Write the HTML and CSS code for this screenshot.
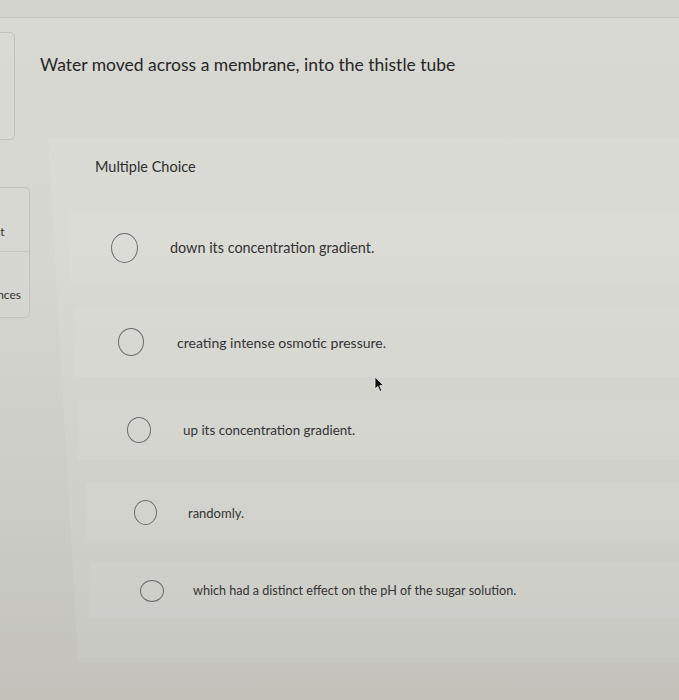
FILE: index.html
```html
<html>
  <head>
    <meta charset="utf-8" />
    <title>Multiple Choice</title>
    <meta name="viewport" content="width=device-width, initial-scale=1" />
    <link rel="stylesheet" href="styles.css">
  </head>
  <body>
    <div class="topbar"></div>
    <div class="page">
      <div class="side">
        <div class="side_card side_card_top"></div>
        <div class="side_card side_card_links">
          <div class="side_link side_link_first">Print</div>
          <div class="side_link">References</div>
        </div>
      </div>
      <div class="main">
        <p class="question">Water moved across a membrane, into the thistle tube</p>
        <div class="answer_panel">
          <p class="panel_heading">Multiple Choice</p>
          <label class="choice choice_1">
            <span class="radio"></span>
            <span class="choice_text">down its concentration gradient.</span>
          </label>
          <label class="choice choice_2">
            <span class="radio"></span>
            <span class="choice_text">creating intense osmotic pressure.</span>
          </label>
          <label class="choice choice_3">
            <span class="radio"></span>
            <span class="choice_text">up its concentration gradient.</span>
          </label>
          <label class="choice choice_4">
            <span class="radio"></span>
            <span class="choice_text">randomly.</span>
          </label>
          <label class="choice choice_5">
            <span class="radio"></span>
            <span class="choice_text">which had a distinct effect on the pH of the sugar solution.</span>
          </label>
        </div>
      </div>
    </div>
    <!-- mouse pointer -->
    <svg class="pointer" width="11" height="17" viewBox="0 0 11 17">
      <path d="M1 1 L1 13 L3.8 10.4 L6 15.5 L7.8 14.7 L5.7 9.7 L9.6 9.6 Z" fill="#111" stroke="#eee" stroke-width="0.8"/>
    </svg>
  </body>
</html>
```

FILE: styles.css
```css
body {
  margin: 0;
  width: 679px;
  height: 700px;
  overflow: hidden;
  position: relative;
  font-family: Lato, "Open Sans", sans-serif;
  color: #2b2b2b;
  background: linear-gradient(to bottom, #d8d9d3 0%, #d7d7d1 35%, #cdcdc7 70%, #c2c2bb 100%);
}

.topbar {
  height: 17px;
  background: #d2d3cd;
  border-bottom: 1px solid #c6c7c1;
}

.page {
  display: flex;
}

/* left column, mostly off the edge */
.side {
  width: 36px;
  flex: none;
}
.side_card {
  border: 1px solid #c2c2bc;
  border-radius: 5px;
  background: rgba(255, 255, 255, 0.04);
}
.side_card_top {
  margin: 14px 0 0 -60px;
  width: 73px;
  height: 106px;
}
.side_card_links {
  margin: 47px 0 0 -46px;
  width: 74px;
  height: 129px;
}
.side_link {
  height: 65px;
  box-sizing: border-box;
  padding-top: 36px;
  text-align: center;
  font-size: 12px;
  line-height: 14px;
  color: #333;
}
.side_link_first {
  height: 64px;
  padding-top: 37px;
  border-bottom: 1px solid #c6c6c0;
}

.main {
  flex: 1;
  min-width: 0;
}
.question {
  margin: 0;
  padding: 35px 0 0 4px;
  height: 84px;
  font-size: 17.5px;
  line-height: 24px;
  color: #262626;
}

.answer_panel {
  margin-left: 12px;
  padding: 20px 0 44px;
  background: rgba(255, 255, 255, 0.08);
  clip-path: polygon(0 0, 100% 0, 100% 100%, 30px 100%);
}
.panel_heading {
  margin: 0 0 35px 47px;
  font-size: 14.5px;
  line-height: 20px;
  color: #2e2e2e;
}

.choice {
  display: flex;
  align-items: center;
  background: rgba(255, 255, 255, 0.07);
  color: #333;
}
.radio {
  flex: none;
  box-sizing: border-box;
  border: 1.5px solid #6c6c6a;
  border-radius: 50%;
}

.choice_1 {
  margin-left: 22px;
  height: 71px;
  padding-left: 41px;
  gap: 32px;
  font-size: 14.4px;
}
.choice_1 .radio {
  width: 27px;
  height: 30px;
}
.choice_2 {
  margin: 24px 0 0 26px;
  height: 70px;
  padding-left: 44px;
  gap: 33px;
  font-size: 14px;
}
.choice_2 .radio {
  width: 26px;
  height: 28px;
}
.choice_3 {
  margin: 23px 0 0 30px;
  height: 60px;
  padding-left: 49px;
  gap: 32px;
  font-size: 13.4px;
}
.choice_3 .radio {
  width: 24px;
  height: 26px;
}
.choice_4 {
  margin: 23px 0 0 38px;
  height: 59px;
  padding-left: 48px;
  gap: 31px;
  font-size: 13px;
}
.choice_4 .radio {
  width: 23px;
  height: 25px;
}
.choice_5 {
  margin: 21px 0 0 42px;
  height: 55px;
  padding-left: 50px;
  gap: 29px;
  font-size: 12.6px;
}
.choice_5 .radio {
  width: 24px;
  height: 22px;
}

.pointer {
  position: absolute;
  left: 374px;
  top: 376px;
}
```
